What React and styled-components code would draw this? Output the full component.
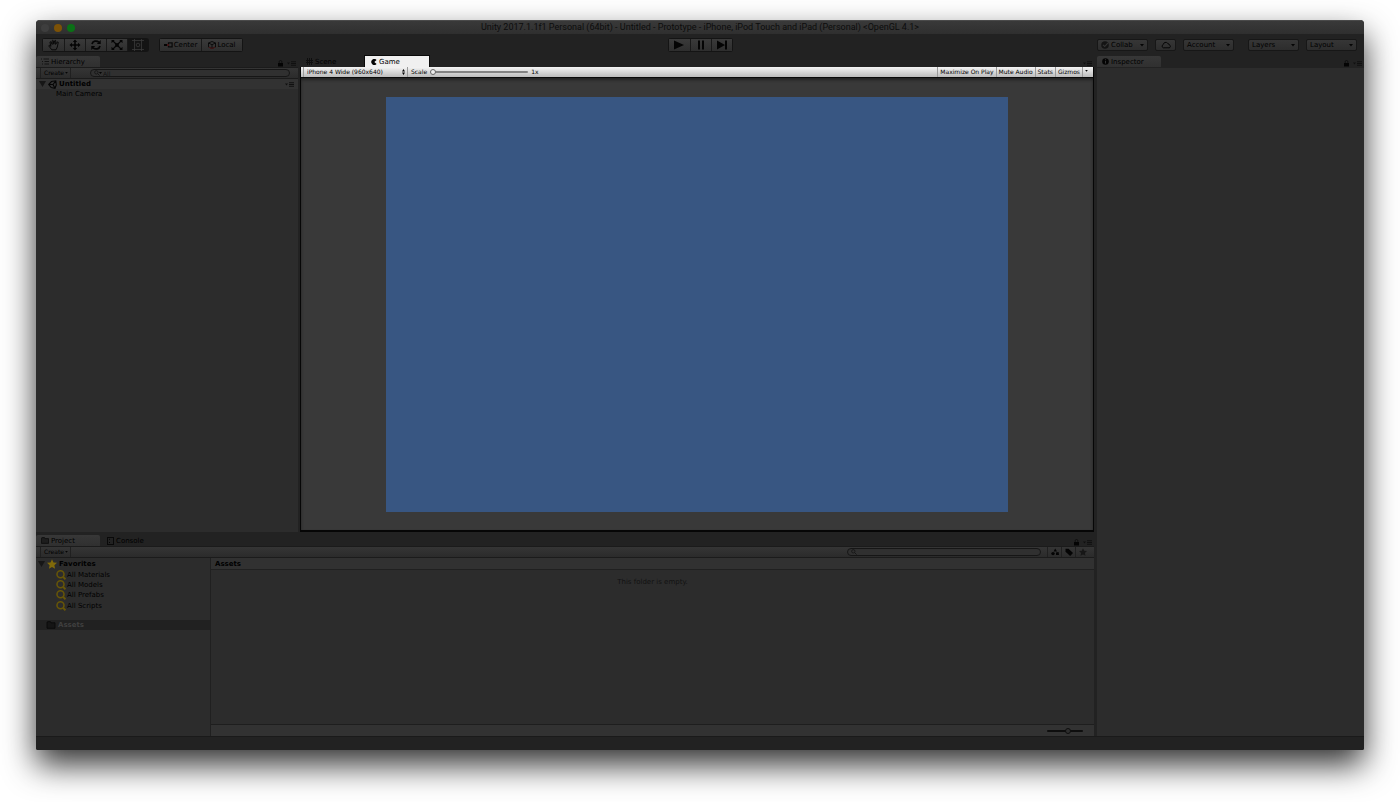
import React from "react";
import styled, { createGlobalStyle, css } from "styled-components";

export default function App() {
  return (
    <Page>
      <GlobalStyle />
      <Window>
        <TitleBar>
          <Lights>
            <Light $color="#3e3e3e" />
            <Light $color="#7d5206" />
            <Light $color="#0a7016" />
          </Lights>
          <Title>
            Unity 2017.1.1f1 Personal (64bit) - Untitled - Prototype - iPhone,
            iPod Touch and iPad (Personal) &lt;OpenGL 4.1&gt;
          </Title>
        </TitleBar>

        <Toolbar>
          <ToolbarSide>
            <ButtonGroup>
              <ToolButton aria-label="Hand"><HandIcon /></ToolButton>
              <ToolButton aria-label="Move"><MoveIcon /></ToolButton>
              <ToolButton aria-label="Rotate"><RotateIcon /></ToolButton>
              <ToolButton aria-label="Scale"><ScaleIcon /></ToolButton>
              <ToolButton aria-label="Rect" $active><RectIcon /></ToolButton>
            </ButtonGroup>
            <ButtonGroup>
              <ToolButton $wide><PivotIcon />Center</ToolButton>
              <ToolButton $wide><CubeIcon />Local</ToolButton>
            </ButtonGroup>
          </ToolbarSide>
          <ButtonGroup>
            <ToolButton aria-label="Play">
              <svg width="10" height="10" viewBox="0 0 10 10"><path d="M0 0.5L10 5L0 9.5z" /></svg>
            </ToolButton>
            <ToolButton aria-label="Pause">
              <svg width="10" height="10" viewBox="0 0 10 10"><path d="M2 .5h2v9h-2zM6 .5h2v9h-2z" /></svg>
            </ToolButton>
            <ToolButton aria-label="Step">
              <svg width="10" height="10" viewBox="0 0 10 10"><path d="M0 .5L8 5L0 9.5zM8 .5h2v9h-2z" /></svg>
            </ToolButton>
          </ButtonGroup>
          <ToolbarSide $end>
            <ButtonCluster>
              <MenuButton><CollabIcon />Collab<Caret /></MenuButton>
              <CloudButton aria-label="Cloud services"><CloudIcon /></CloudButton>
              <MenuButton>Account<Caret /></MenuButton>
            </ButtonCluster>
            <ButtonCluster>
              <MenuButton>Layers<Caret /></MenuButton>
              <MenuButton>Layout<Caret /></MenuButton>
            </ButtonCluster>
          </ToolbarSide>
        </Toolbar>

        <Workspace>
          <MainArea>
            <TopRow>
              <Hierarchy>
                <TabBar>
                  <Tab $active><ListIcon />Hierarchy</Tab>
                  <PanelControls lock />
                </TabBar>
                <PanelToolbar>
                  <CreateButton>Create<Caret small /></CreateButton>
                  <SearchBox $width="200px" $inset>
                    <SearchIcon caret />
                    <input type="text" aria-label="Search hierarchy" placeholder="All" />
                  </SearchBox>
                </PanelToolbar>
                <SceneRow>
                  <Arrow />
                  <UnityIcon />
                  <strong>Untitled</strong>
                  <MenuIcon />
                </SceneRow>
                <ObjectRow>Main Camera</ObjectRow>
              </Hierarchy>

              <GamePanel>
                <TabBar>
                  <Tab><GridIcon />Scene</Tab>
                  <Tab $light><GameIcon />Game</Tab>
                  <PanelControls />
                </TabBar>
                <GameFrame>
                  <GameToolbar>
                    <AspectBox>
                      <select aria-label="Aspect">
                        <option>iPhone 4 Wide (960x640)</option>
                      </select>
                      <svg width="3" height="6" viewBox="0 0 3 6"><path d="M0 2.4L1.5 0L3 2.4zM0 3.6L1.5 6L3 3.6z" /></svg>
                    </AspectBox>
                    <ScaleLabel>
                      Scale
                      <Slider type="range" min="1" max="5" defaultValue="1" $width="98px" />
                      <output>1x</output>
                    </ScaleLabel>
                    <GameButtons>
                      <GameButton>Maximize On Play</GameButton>
                      <GameButton>Mute Audio</GameButton>
                      <GameButton>Stats</GameButton>
                      <GameButton>Gizmos</GameButton>
                      <GameButton aria-label="Gizmos menu"><Caret small /></GameButton>
                    </GameButtons>
                  </GameToolbar>
                  <GameView>
                    <GameScreen />
                  </GameView>
                </GameFrame>
              </GamePanel>
            </TopRow>

            <Project>
              <TabBar>
                <Tab $active><FolderIcon />Project</Tab>
                <Tab><ConsoleIcon />Console</Tab>
                <PanelControls lock />
              </TabBar>
              <PanelToolbar>
                <CreateButton>Create<Caret small /></CreateButton>
                <ProjectSearch>
                  <SearchBox $width="194px">
                    <SearchIcon />
                    <input type="text" aria-label="Search project" />
                  </SearchBox>
                  <FilterButtons>
                    <FilterButton aria-label="Search by type">
                      <svg width="8" height="8" viewBox="0 0 8 8"><circle cx="2" cy="5.6" r="1.7" /><path d="M4.2 .4L6 3.6H2.6zM5 4.4L7.6 4L8 7H5z" /></svg>
                    </FilterButton>
                    <FilterButton aria-label="Search by label">
                      <svg width="8" height="8" viewBox="0 0 8 8"><path d="M.5.8L3.5.8L8 5L5.2 8L.5 3.8z" /></svg>
                    </FilterButton>
                    <FilterButton aria-label="Save search"><StarIcon size={8} /></FilterButton>
                  </FilterButtons>
                </ProjectSearch>
              </PanelToolbar>
              <ProjectBody>
                <Tree>
                  <Favorites>
                    <TreeHead>
                      <Arrow />
                      <StarIcon size={10} fill="#80690a" />
                      <strong>Favorites</strong>
                    </TreeHead>
                    {["All Materials", "All Models", "All Prefabs", "All Scripts"].map((name) => (
                      <TreeItem key={name}><LensIcon />{name}</TreeItem>
                    ))}
                  </Favorites>
                  <SelectedFolder><FolderIcon large /><strong>Assets</strong></SelectedFolder>
                </Tree>
                <Content>
                  <ContentHeader>Assets</ContentHeader>
                  <Empty>This folder is empty.</Empty>
                  <ContentFooter>
                    <Slider type="range" aria-label="Icon size" defaultValue="60" $width="36px" $dark />
                  </ContentFooter>
                </Content>
              </ProjectBody>
            </Project>
          </MainArea>

          <Inspector>
            <TabBar>
              <Tab $active><InfoIcon />Inspector</Tab>
              <PanelControls lock />
            </TabBar>
            <InspectorBody />
          </Inspector>
        </Workspace>
        <StatusBar />
      </Window>
    </Page>
  );
}

/* icons */

const Caret = ({ small }) => (
  <svg width={small ? 3 : 4} height={small ? 2 : 3} viewBox="0 0 4 3"><path d="M0 0h4L2 2.6z" /></svg>
);

const Arrow = () => (
  <svg width="7" height="6" viewBox="0 0 7 6"><path d="M0 0h7L3.5 6z" fill="#161616" /></svg>
);

const HandIcon = () => (
  <svg width="12" height="12" viewBox="0 0 12 12" fill="none" stroke="#050505" strokeWidth="0.9">
    <path d="M3.8 10.8L1 7.2Q.6 6.2 1.6 6.3L3 7.3L2 3.4Q2.1 2.4 3 2.9L4.2 5.5L4.1 1.8Q4.7.7 5.3 1.7L5.8 5.2L6.8 1.6Q7.7 1 7.8 2L7.6 5.4L9.4 2.9Q10.4 2.7 10.2 3.7L9.3 8L8 10.8z" />
  </svg>
);

const MoveIcon = () => (
  <svg width="12" height="12" viewBox="0 0 12 12">
    <path d="M6 0.5L8.2 3H6.8V5.2H9V3.8L11.5 6L9 8.2V6.8H6.8V9H8.2L6 11.5L3.8 9H5.2V6.8H3V8.2L.5 6L3 3.8V5.2H5.2V3H3.8z" />
  </svg>
);

const RotateIcon = () => (
  <svg width="12" height="12" viewBox="0 0 12 12">
    <path d="M2 5C2.6 1.8 6.6 1.2 8.8 3.2M10 7C9.4 10.2 5.4 10.8 3.2 8.8" fill="none" stroke="#050505" strokeWidth="1.7" />
    <path d="M10.7 1V5H6.8zM1.3 11V7H5.2z" />
  </svg>
);

const ScaleIcon = () => (
  <svg width="12" height="12" viewBox="0 0 12 12">
    <path d="M2 2L10 10M10 2L2 10" stroke="#050505" strokeWidth="1.1" />
    <path d="M4.3 4.3h3.4v3.4h-3.4zM.5 1h3.2L.5 4.2zM11.5 1H8.3l3.2 3.2zM.5 11h3.2L.5 7.8zM11.5 11H8.3l3.2-3.2z" />
  </svg>
);

const RectIcon = () => (
  <svg width="12" height="12" viewBox="0 0 12 12" fill="none" stroke="#3a3a3a" strokeWidth="0.8">
    <path d="M2.5 0v12M9.5 0v12M0 1.5h12M0 10.5h12" />
    <circle cx="6" cy="6" r="1.8" />
  </svg>
);

const PivotIcon = () => (
  <svg width="9" height="6" viewBox="0 0 9 6">
    <path d="M0 2h4v2h-4z" />
    <rect x="4.5" y=".9" width="3.6" height="4" fill="none" stroke="#080808" strokeWidth="1.2" />
    <rect x="3" y="2" width="2" height="2" fill="#421414" />
  </svg>
);

const CubeIcon = () => (
  <svg width="8" height="8" viewBox="0 0 8 8" fill="none" stroke="#080808" strokeWidth="0.9">
    <path d="M4 .5L7.5 2v4L4 7.5L.5 6V2zM.5 2L4 3.7L7.5 2M4 3.7v3.8" />
    <path d="M.8 6.2L4 7.5L7 6.2" stroke="#511515" />
  </svg>
);

const CollabIcon = () => (
  <svg width="8" height="8" viewBox="0 0 8 8">
    <circle cx="4" cy="4" r="3.8" fill="#141414" />
    <path d="M2 3.8L3.7 5.5L7 1.8" fill="none" stroke="#353535" strokeWidth="1.1" />
  </svg>
);

const CloudIcon = () => (
  <svg width="10" height="8" viewBox="0 0 10 8" fill="none" stroke="#050505" strokeWidth="1">
    <path d="M2.4 6.8A1.7 1.7 0 0 1 2.2 3.6A2.5 2.5 0 0 1 6.7 2.4A2 2 0 0 1 8.3 3.9A1.5 1.5 0 0 1 8.2 6.8z" />
  </svg>
);

const ListIcon = () => (
  <svg width="8" height="7" viewBox="0 0 8 7">
    <path
      d="M0 .5h1v1H0zM2.5.5h5.5v1H2.5zM1 3h1v1H1zM3.5 3H8v1H3.5zM1 5.5h1v1H1zM3.5 5.5H8v1H3.5z"
      fill="#121212"
    />
  </svg>
);

const GridIcon = () => (
  <svg width="7" height="7" viewBox="0 0 7 7" stroke="#0e0e0e" strokeWidth="1">
    <path d="M1.5 0v7M3.5 0v7M5.5 0v7M0 2.5h7M0 4.5h7" />
  </svg>
);

const GameIcon = () => (
  <svg width="6" height="6" viewBox="0 0 6 6"><path d="M5.6 1L3.3 3L5.6 5A3 3 0 1 1 5.6 1z" /></svg>
);

const InfoIcon = () => (
  <svg width="7" height="7" viewBox="0 0 7 7">
    <circle cx="3.5" cy="3.5" r="3.3" />
    <path d="M3 1.2h1v1h-1zM3 3h1v2.6h-1z" fill="#333" />
  </svg>
);

const FolderIcon = ({ large }) => (
  <svg width={large ? 10 : 8} height={large ? 8 : 7} viewBox="0 0 8 7">
    <path
      d="M.5 1.5Q.5.6 1.3.6H3.5L4.2 1.6H7.5V6.4H.5z"
      fill={large ? "#151515" : "#1d1d1d"}
      stroke="#090909"
      strokeWidth="0.7"
    />
  </svg>
);

const ConsoleIcon = () => (
  <svg width="7" height="8" viewBox="0 0 7 8">
    <rect x=".5" y=".5" width="6" height="7" fill="none" stroke="#090909" />
    <path d="M2 1.8h1v1h-1zM2 5h1v1h-1z" />
  </svg>
);

const UnityIcon = () => (
  <svg width="9" height="9" viewBox="0 0 9 9" fill="none" stroke="#050505" strokeWidth="1.1">
    <path d="M.7 4.5L3.5 1.5L7.8.8L8.3 5L7 8.3L3.2 7.6zM.7 4.5H5M5 4.5L7.8.8M5 4.5L7 8.3" />
  </svg>
);

const StarIcon = ({ size, fill = "#171717" }) => (
  <svg width={size} height={size} viewBox="0 0 10 10">
    <path d="M5 .2L6.5 3.4L10 3.8L7.4 6.2L8.1 9.8L5 8L1.9 9.8L2.6 6.2L0 3.8L3.5 3.4z" fill={fill} />
  </svg>
);

const LensIcon = () => (
  <svg width="10" height="10" viewBox="0 0 10 10" fill="none" stroke="#665508" strokeWidth="1.6">
    <circle cx="4.5" cy="4.3" r="3.5" />
    <path d="M7 6.8L9.5 9.3" strokeWidth="2" />
  </svg>
);

const SearchIcon = ({ caret }) => (
  <svg width={caret ? 8 : 6} height="6" viewBox={caret ? "0 0 8 6" : "0 0 6 6"}>
    <circle cx="2.3" cy="2.3" r="1.7" fill="none" stroke="#141414" strokeWidth="0.8" />
    <path d="M3.5 3.5L5.6 5.6" stroke="#141414" strokeWidth="0.9" />
    {caret && <path d="M5 2h3L6.5 4z" />}
  </svg>
);

const LockIcon = () => (
  <svg width="5" height="7" viewBox="0 0 5 7">
    <path d="M0 3h5v3.5H0z" />
    <path d="M1.2 3V1.8A1.3 1.3 0 0 1 3.8 1.8V3" fill="none" stroke="#0c0c0c" strokeWidth="0.8" />
  </svg>
);

const MenuIcon = () => (
  <svg width="9" height="5" viewBox="0 0 9 5">
    <path d="M0 1.5h3L1.5 3.5zM4 .3h5v1H4zM4 2h5v1H4zM4 3.7h5v1H4z" fill="#101010" />
  </svg>
);

function PanelControls({ lock }) {
  return (
    <Controls>
      {lock && <IconButton aria-label="Lock"><LockIcon /></IconButton>}
      <IconButton aria-label="Panel menu"><MenuIcon /></IconButton>
    </Controls>
  );
}

/* styles */

const GlobalStyle = createGlobalStyle`
  * {
    box-sizing: border-box;
  }
  body {
    margin: 0;
    background: #fff;
  }
  button, input, select {
    margin: 0;
    padding: 0;
    border: 0;
    background: none;
    color: inherit;
    font: inherit;
  }
  svg {
    flex: none;
    display: block;
    fill: #040404;
  }
  svg[fill="none"] {
    fill: none;
  }
`;

const Page = styled.div`
  min-height: 100vh;
  padding: 20px 36px 52px;
  display: flex;
  overflow: hidden;
  font: 7px/10px "DejaVu Sans", Verdana, sans-serif;
  color: #000;
`;

const Window = styled.main`
  flex: 1;
  min-width: 0;
  display: flex;
  flex-direction: column;
  background: #222;
  border-radius: 4px 4px 2px 2px;
  overflow: hidden;
  box-shadow: 0 15px 32px rgba(0, 0, 0, 0.8);
`;

const TitleBar = styled.header`
  height: 14px;
  display: grid;
  grid-template-columns: 1fr auto 1fr;
  align-items: center;
  background: linear-gradient(#393939, #2f2f2f);
  border-top: 1px solid #4a4a4a;
`;

const Lights = styled.div`
  display: flex;
  gap: 5px;
  padding-left: 5px;
`;

const Light = styled.span`
  width: 8px;
  height: 8px;
  border-radius: 50%;
  background: ${(props) => props.$color};
`;

const Title = styled.h1`
  margin: 0;
  font: 400 9px/13px Roboto, sans-serif;
  color: #0c0c0c;
  white-space: nowrap;
`;

const Toolbar = styled.div`
  height: 22px;
  padding: 0 7px;
  display: grid;
  grid-template-columns: 1fr auto 1fr;
  align-items: center;
`;

const ToolbarSide = styled.div`
  display: flex;
  gap: ${(props) => (props.$end ? "14px" : "12px")};
  justify-content: ${(props) => (props.$end ? "flex-end" : "flex-start")};
`;

const ButtonCluster = styled.div`
  display: flex;
  gap: 7px;
`;

const ButtonGroup = styled.div`
  display: flex;
  border-radius: 2px;
  box-shadow: 0 0 0 1px #141414;
`;

const ToolButton = styled.button`
  width: ${(props) => (props.$wide ? "41px" : "21px")};
  height: 12px;
  display: flex;
  align-items: center;
  justify-content: center;
  gap: 1px;
  background: ${(props) =>
    props.$active ? "#141414" : "linear-gradient(#3a3a3a, #2e2e2e)"};

  & + & {
    border-left: 1px solid #191919;
  }
`;

const MenuButton = styled.button`
  width: 51px;
  height: 12px;
  padding: 0 3px;
  display: flex;
  align-items: center;
  gap: 2px;
  border: 1px solid #171717;
  border-radius: 2px;
  background: linear-gradient(#363636, #2d2d2d);

  svg:last-child {
    margin-left: auto;
  }
`;

const CloudButton = styled(MenuButton)`
  width: 21px;
  padding: 0 4px;
`;

const Workspace = styled.div`
  flex: 1;
  display: flex;
  gap: 3px;
`;

const MainArea = styled.div`
  flex: 1;
  min-width: 0;
  display: flex;
  flex-direction: column;
  gap: 3px;
`;

const TopRow = styled.div`
  flex: 1;
  display: flex;
  gap: 2px;
`;

const Hierarchy = styled.section`
  width: 262px;
  display: flex;
  flex-direction: column;
  background: #2c2c2c;
`;

const TabBar = styled.div`
  height: 11px;
  display: flex;
  gap: 1px;
  background: #222;
`;

const Tab = styled.button`
  width: 64px;
  padding-left: 6px;
  display: flex;
  align-items: center;
  gap: 2px;

  ${(props) =>
    props.$active &&
    css`
      padding-left: 5px;
      background: linear-gradient(#373737, #303030);
      border-radius: 2px 2px 0 0;
    `}

  ${(props) =>
    props.$light &&
    css`
      background: #f0f0f0;
      box-shadow: 0 0 0 1px #0a0a0a;
    `}
`;

const Controls = styled.div`
  margin-left: auto;
  padding: 3px 2px 0 0;
  display: flex;
  align-items: center;
  gap: 4px;
`;

const IconButton = styled.button`
  display: flex;
`;

const PanelToolbar = styled.div`
  height: 12px;
  padding: 0 5px 0 4px;
  display: flex;
  align-items: center;
  justify-content: space-between;
  background: linear-gradient(#353535, #2b2b2b);
  border-top: 1px solid #1b1b1b;
  border-bottom: 1px solid #1b1b1b;
  font-size: 6px;
`;

const CreateButton = styled.button`
  width: 31px;
  height: 10px;
  padding: 0 2px 0 3px;
  display: flex;
  align-items: center;
  justify-content: space-between;
  border: solid #202020;
  border-width: 0 1px;
`;

const SearchBox = styled.label`
  width: ${(props) => props.$width};
  height: 8px;
  padding-left: 3px;
  margin-right: ${(props) => (props.$inset ? "3px" : "0")};
  display: flex;
  align-items: center;
  gap: 1px;
  border: 1px solid #161616;
  border-radius: 4px;
  background: #303030;

  input {
    flex: 1;
    min-width: 0;
    height: 6px;
    outline: 0;
    line-height: 6px;
  }

  input::placeholder {
    color: #121212;
    opacity: 1;
  }
`;

const SceneRow = styled.div`
  height: 10px;
  padding: 0 4px 0 3px;
  display: flex;
  align-items: center;
  gap: 2px;
  background: #323232;

  svg:last-child {
    margin-left: auto;
  }
`;

const ObjectRow = styled.div`
  padding-left: 20px;
  line-height: 11px;
`;

const GamePanel = styled.section`
  flex: 1;
  min-width: 0;
  display: flex;
  flex-direction: column;
`;

const GameFrame = styled.div`
  flex: 1;
  display: flex;
  flex-direction: column;
  border: solid #060606;
  border-width: 0 1px 2px;
`;

const GameToolbar = styled.div`
  height: 11px;
  padding: 0 2px;
  display: flex;
  align-items: stretch;
  background: linear-gradient(#f4f4f4, #bcbcbc);
  border-bottom: 1px solid #0a0a0a;
  font-size: 6px;
`;

const AspectBox = styled.div`
  width: 105px;
  padding-right: 2px;
  display: flex;
  align-items: center;
  border: solid #9a9a9a;
  border-width: 0 1px;

  select {
    flex: 1;
    height: 10px;
    padding-left: 3px;
    appearance: none;
    line-height: 10px;
  }
`;

const ScaleLabel = styled.label`
  padding-left: 3px;
  display: flex;
  align-items: center;
  gap: 3px;
`;

const Slider = styled.input`
  width: ${(props) => props.$width};
  height: 8px;
  appearance: none;

  &::-webkit-slider-runnable-track {
    height: 2px;
    border-radius: 1px;
    background: ${(props) => (props.$dark ? "#0e0e0e" : "#828282")};
  }

  &::-webkit-slider-thumb {
    appearance: none;
    width: 6px;
    height: 6px;
    margin-top: -2px;
    border: 1px solid ${(props) => (props.$dark ? "#0e0e0e" : "#666")};
    border-radius: 50%;
    background: ${(props) => (props.$dark ? "#2e2e2e" : "#eee")};
  }
`;

const GameButtons = styled.div`
  margin-left: auto;
  display: flex;
`;

const GameButton = styled.button`
  padding: 0 2px;
  display: flex;
  align-items: center;
  border-left: 1px solid #9a9a9a;

  &:last-child {
    padding: 0 3px 2px 2px;
  }
`;

const GameView = styled.div`
  flex: 1;
  padding: 19px 0 18px;
  display: flex;
  justify-content: center;
  background: #393939;
  box-shadow: inset 0 2px 3px #222;
`;

const GameScreen = styled.div`
  aspect-ratio: 3 / 2;
  background: #385682;
`;

const Project = styled.section`
  height: 201px;
  display: flex;
  flex-direction: column;
  background: #2c2c2c;
`;

const ProjectSearch = styled.div`
  display: flex;
  align-items: center;
  gap: 6px;
`;

const FilterButtons = styled.div`
  display: flex;
`;

const FilterButton = styled.button`
  width: 14px;
  height: 10px;
  display: flex;
  align-items: center;
  justify-content: center;
  border-left: 1px solid #202020;
`;

const ProjectBody = styled.div`
  flex: 1;
  display: flex;
`;

const Tree = styled.nav`
  width: 175px;
  border-right: 1px solid #202020;
`;

const Favorites = styled.div`
  height: 53px;
  padding-top: 1px;
  display: flex;
  flex-direction: column;
`;

const TreeHead = styled.div`
  flex: 1;
  padding-left: 2px;
  display: flex;
  align-items: center;
  gap: 2px;
`;

const TreeItem = styled.div`
  flex: 1;
  padding-left: 20px;
  display: flex;
  align-items: center;
  gap: 1px;
`;

const SelectedFolder = styled.div`
  margin-top: 9px;
  padding-left: 10px;
  display: flex;
  align-items: center;
  gap: 2px;
  background: #212121;
  color: #3f3f3f;
`;

const Content = styled.div`
  flex: 1;
  display: flex;
  flex-direction: column;
`;

const ContentHeader = styled.h2`
  height: 12px;
  margin: 0;
  padding-left: 4px;
  background: #313131;
  border-bottom: 1px solid #202020;
  font: inherit;
  font-weight: 700;
  line-height: 12px;
`;

const Empty = styled.p`
  flex: 1;
  margin: 0;
  padding-top: 7px;
  text-align: center;
  color: #121212;
`;

const ContentFooter = styled.div`
  height: 12px;
  padding-right: 11px;
  display: flex;
  align-items: center;
  justify-content: flex-end;
  background: #323232;
  border-top: 1px solid #1e1e1e;
`;

const Inspector = styled.aside`
  width: 267px;
  display: flex;
  flex-direction: column;
`;

const InspectorBody = styled.div`
  flex: 1;
  background: #2c2c2c;
  border-top: 1px solid #222;
`;

const StatusBar = styled.footer`
  height: 14px;
  background: #222;
  border-top: 1px solid #1a1a1a;
`;
